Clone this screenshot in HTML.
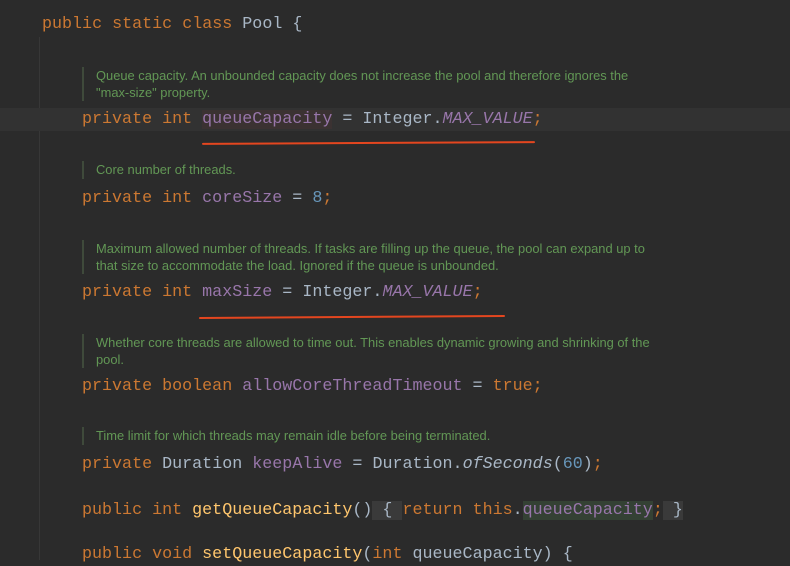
<!DOCTYPE html><html><head><style>
body{margin:0;width:790px;height:560px;background:#2b2b2b;overflow:hidden;position:relative;font-family:"Liberation Mono",monospace}
.l{position:absolute;left:0;height:22px;line-height:22px;font-size:16.7px;white-space:pre;color:#a9b7c6}
.k{color:#cc7832}.f{color:#9876aa}.n{color:#6897bb}.i{color:#9876aa;font-style:italic}.m{color:#ffc66d}
.c{position:absolute;left:82px;border-left:2px solid #3f4a3b;padding-left:12px;font-family:"Liberation Sans",sans-serif;font-size:12.9px;line-height:16.5px;color:#629755;width:600px;padding-top:1px}
.u{position:absolute;height:2px;background:#e4461f;border-radius:1px}
</style></head><body>
<div style="position:absolute;left:39px;top:37px;width:1px;height:523px;background:#373737"></div>
<div style="position:absolute;left:0;top:108px;width:790px;height:23px;background:#323232"></div>
<div class="l" style="top:14px;left:42px"><span class="k">public static class </span>Pool {</div>
<div class="c" style="top:67px">Queue capacity. An unbounded capacity does not increase the pool and therefore ignores the<br>"max-size" property.</div>
<div class="l" style="top:109px;left:82px"><span class="k">private int </span><span class="f" style="background:#3b3232">queueCapacity</span> = Integer.<span class="i">MAX_VALUE</span><span class="k">;</span></div>
<div class="u" style="left:202px;top:142px;width:333px;transform:rotate(-0.3deg)"></div>
<div class="c" style="top:161px">Core number of threads.</div>
<div class="l" style="top:188px;left:82px"><span class="k">private int </span><span class="f">coreSize</span> = <span class="n">8</span><span class="k">;</span></div>
<div class="c" style="top:240px">Maximum allowed number of threads. If tasks are filling up the queue, the pool can expand up to<br>that size to accommodate the load. Ignored if the queue is unbounded.</div>
<div class="l" style="top:282px;left:82px"><span class="k">private int </span><span class="f">maxSize</span> = Integer.<span class="i">MAX_VALUE</span><span class="k">;</span></div>
<div class="u" style="left:199px;top:316px;width:306px;transform:rotate(-0.4deg)"></div>
<div class="c" style="top:334px">Whether core threads are allowed to time out. This enables dynamic growing and shrinking of the<br>pool.</div>
<div class="l" style="top:376px;left:82px"><span class="k">private boolean </span><span class="f">allowCoreThreadTimeout</span> = <span class="k">true;</span></div>
<div class="c" style="top:427px">Time limit for which threads may remain idle before being terminated.</div>
<div class="l" style="top:454px;left:82px"><span class="k">private </span>Duration <span class="f">keepAlive</span> = Duration.<i>ofSeconds</i>(<span class="n">60</span>)<span class="k">;</span></div>
<div class="l" style="top:500px;left:82px"><span class="k">public int </span><span class="m">getQueueCapacity</span>()<span style="background:#3a3a3a"> { </span><span class="k">return this</span>.<span class="f" style="background:#344134">queueCapacity</span><span class="k">;</span><span style="background:#3a3a3a"> }</span></div>
<div class="l" style="top:544px;left:82px"><span class="k">public void </span><span class="m">setQueueCapacity</span>(<span class="k">int </span>queueCapacity) {</div>
</body></html>
